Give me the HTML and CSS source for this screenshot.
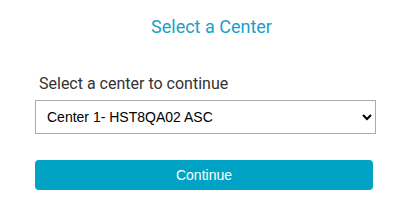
FILE: index.html
```html
<!DOCTYPE html>
<html lang="en">
<head>
  <meta charset="UTF-8" />
  <title>Select a Center</title>
  <link rel="stylesheet" href="styles.css">
</head>
<body>
  <div class="panel">
    <h1 class="titulo">Select a Center</h1>
    <label class="etiqueta" for="centro">Select a center to continue</label>
    <select id="centro" class="centro">
      <option>Center 1- HST8QA02 ASC</option>
    </select>
    <button class="continuar">Continue</button>
  </div>
</body>
</html>
```

FILE: styles.css
```css
body {
  margin: 0;
  background: #fff;
  font-family: Roboto, Arial, sans-serif;
}
.panel {
  width: 341px;
  margin-left: 35px;
  padding-top: 15px;
  display: flex;
  flex-direction: column;
}
.titulo {
  margin: 0;
  text-align: center;
  font-size: 18px;
  font-weight: normal;
  color: #1a9fca;
  line-height: 24px;
  padding-left: 12px;
}
.etiqueta {
  margin-top: 34px;
  margin-left: 4px;
  font-size: 16px;
  color: #333;
  line-height: 22px;
}
.centro {
  margin-top: 5px;
  height: 34px;
  border: 1px solid #aaa;
  border-radius: 0;
  background: #fff;
  font-family: Arial, "Liberation Sans", sans-serif;
  font-size: 14px;
  color: #000;
  padding: 0 7px;
}
.continuar {
  margin-top: 26px;
  width: 338px;
  height: 30px;
  border: none;
  border-radius: 4px;
  background: #00a3c4;
  color: #fff;
  font-family: Arial, "Liberation Sans", sans-serif;
  font-size: 14px;
  cursor: pointer;
}
```
